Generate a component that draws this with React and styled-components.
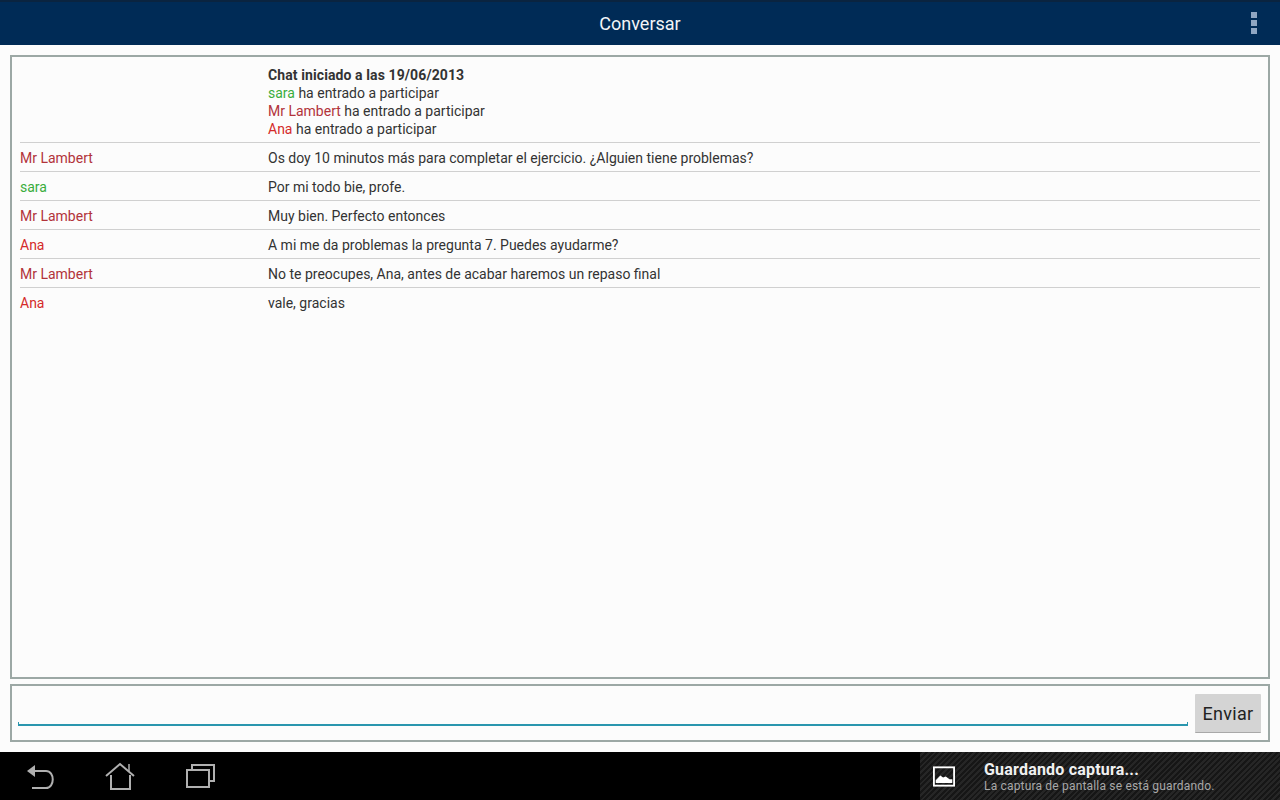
import React from 'react';
import styled, { createGlobalStyle } from 'styled-components';

const RED = '#b2333a';
const BRIGHT_RED = '#d42a2a';
const GREEN = '#3aad3c';

const messages = [
  { name: 'Mr Lambert', color: RED, text: 'Os doy 10 minutos más para completar el ejercicio. ¿Alguien tiene problemas?' },
  { name: 'sara', color: GREEN, text: 'Por mi todo bie, profe.' },
  { name: 'Mr Lambert', color: RED, text: 'Muy bien. Perfecto entonces' },
  { name: 'Ana', color: BRIGHT_RED, text: 'A mi me da problemas la pregunta 7. Puedes ayudarme?' },
  { name: 'Mr Lambert', color: RED, text: 'No te preocupes, Ana, antes de acabar haremos un repaso final' },
  { name: 'Ana', color: BRIGHT_RED, text: 'vale, gracias' },
];

export default function App() {
  return (
    <>
      <GlobalStyle />
      <Page>
        <TopBar>
          <Title>Conversar</Title>
          <Overflow>
            <Dot />
            <Dot />
            <Dot />
          </Overflow>
        </TopBar>
        <Content>
          <LogBox>
            <IntroRow>
              <NameCell />
              <div>
                <Line><Strong>Chat iniciado a las 19/06/2013</Strong></Line>
                <Line><Nick $color={GREEN}>sara</Nick> ha entrado a participar</Line>
                <Line><Nick $color={RED}>Mr Lambert</Nick> ha entrado a participar</Line>
                <Line><Nick $color={BRIGHT_RED}>Ana</Nick> ha entrado a participar</Line>
              </div>
            </IntroRow>
            {messages.map((m, i) => (
              <Row key={i} $last={i === messages.length - 1}>
                <NameCell><Nick $color={m.color}>{m.name}</Nick></NameCell>
                <div>{m.text}</div>
              </Row>
            ))}
          </LogBox>
          <InputBox>
            <Field />
            <Send>Enviar</Send>
          </InputBox>
        </Content>
        <NavBar>
          <NavButtons>
            <NavIcon viewBox="0 0 30 30">
              <path d="M2 10 L10 4 L10 16 Z" fill="#b0b0b0" />
              <path d="M9 10 H21 C30 10 30 27 21 27 H7" fill="none" stroke="#b0b0b0" strokeWidth="2" />
            </NavIcon>
            <NavIcon viewBox="0 0 30 30">
              <path d="M1 15 L15 3 L29 15" fill="none" stroke="#b0b0b0" strokeWidth="2" />
              <path d="M24 3 V10" fill="none" stroke="#b0b0b0" strokeWidth="1.5" />
              <path d="M6 14 V28 H25 V14" fill="none" stroke="#b0b0b0" strokeWidth="2" />
            </NavIcon>
            <NavIcon viewBox="0 0 30 30">
              <rect x="2" y="9" width="22" height="17" fill="none" stroke="#b0b0b0" strokeWidth="2" />
              <path d="M7 9 V4 H29 V20 H24" fill="none" stroke="#b0b0b0" strokeWidth="2" />
            </NavIcon>
          </NavButtons>
          <Notice>
            <NoticeIcon viewBox="0 0 24 22">
              <rect x="1" y="1" width="22" height="20" fill="none" stroke="#fff" strokeWidth="2" />
              <path d="M3 18 V15 L8 10 L11 12 L14 11 L18 14 L21 14 V18 Z" fill="#fff" />
            </NoticeIcon>
            <NoticeText>
              <NoticeTitle>Guardando captura...</NoticeTitle>
              <NoticeSub>La captura de pantalla se está guardando.</NoticeSub>
            </NoticeText>
          </Notice>
        </NavBar>
      </Page>
    </>
  );
}

const GlobalStyle = createGlobalStyle`
  html, body {
    margin: 0;
    padding: 0;
    background: #fcfcfc;
  }
`;

const Page = styled.div`
  width: 1280px;
  height: 800px;
  display: flex;
  flex-direction: column;
  background: #fcfcfc;
  font-family: Roboto, "Liberation Sans", sans-serif;
  overflow: hidden;
`;

const TopBar = styled.div`
  height: 45px;
  flex: none;
  box-sizing: border-box;
  border-top: 2px solid #0a2440;
  background: #002b56;
  display: flex;
  align-items: center;
  justify-content: center;
  position: relative;
`;

const Title = styled.div`
  color: #f2f5f8;
  font-size: 18px;
`;

const Overflow = styled.div`
  position: absolute;
  right: 23px;
  top: 10px;
  display: flex;
  flex-direction: column;
  gap: 2px;
`;

const Dot = styled.div`
  width: 6px;
  height: 6px;
  background: #8fa6c2;
`;

const Content = styled.div`
  flex: 1;
  display: flex;
  flex-direction: column;
  gap: 5px;
  padding: 10px;
  min-height: 0;
`;

const LogBox = styled.div`
  flex: 1;
  border: 2px solid #9ca8a5;
  padding: 9px 8px 0;
  font-size: 14px;
  color: #333;
  line-height: 18px;
`;

const IntroRow = styled.div`
  display: flex;
  height: 77px;
  box-sizing: border-box;
  border-bottom: 1px solid #d0d0d0;
`;

const Line = styled.div`
  height: 18px;
`;

const Strong = styled.span`
  font-weight: 700;
  letter-spacing: 0.1px;
`;

const Row = styled.div`
  display: flex;
  align-items: center;
  height: 29px;
  box-sizing: border-box;
  padding-top: 2px;
  border-bottom: 1px solid ${p => (p.$last ? 'transparent' : '#d0d0d0')};
`;

const NameCell = styled.div`
  width: 248px;
  flex: none;
`;

const Nick = styled.span`
  color: ${p => p.$color};
`;

const InputBox = styled.div`
  height: 58px;
  flex: none;
  box-sizing: border-box;
  border: 2px solid #9ca8a5;
  display: flex;
  align-items: flex-start;
  padding: 8px 7px 0 6px;
  gap: 7px;
`;

const Field = styled.div`
  flex: 1;
  height: 32px;
  box-sizing: border-box;
  border-bottom: 2px solid #2a96ae;
  border-left: 1px solid #2a96ae;
  border-right: 1px solid #2a96ae;
  clip-path: polygon(0 28px, 100% 28px, 100% 100%, 0 100%);
`;

const Send = styled.button`
  width: 66px;
  height: 39px;
  border: none;
  border-bottom: 1px solid #a8a8a8;
  border-radius: 1px;
  background: #d4d4d4;
  color: #222;
  font-family: inherit;
  font-size: 18px;
  letter-spacing: 0.3px;
  padding: 0;
`;

const NavBar = styled.div`
  height: 48px;
  flex: none;
  background: #000;
  display: flex;
  justify-content: space-between;
`;

const NavButtons = styled.div`
  display: flex;
  align-items: center;
  gap: 50px;
  padding-left: 25px;
`;

const NavIcon = styled.svg`
  width: 30px;
  height: 30px;
`;

const Notice = styled.div`
  width: 360px;
  display: flex;
  align-items: center;
  gap: 29px;
  padding-left: 13px;
  box-sizing: border-box;
  background: repeating-linear-gradient(135deg, #161616 0 2px, #262626 2px 4px);
`;

const NoticeIcon = styled.svg`
  width: 22px;
  height: 21px;
  flex: none;
`;

const NoticeText = styled.div`
  display: flex;
  flex-direction: column;
  padding-top: 1px;
`;

const NoticeTitle = styled.div`
  color: #f0f0f0;
  font-size: 16px;
  font-weight: 700;
  letter-spacing: 0.2px;
  line-height: 20px;
`;

const NoticeSub = styled.div`
  color: #a8a8a8;
  font-size: 12px;
  letter-spacing: 0.18px;
  line-height: 13px;
`;
